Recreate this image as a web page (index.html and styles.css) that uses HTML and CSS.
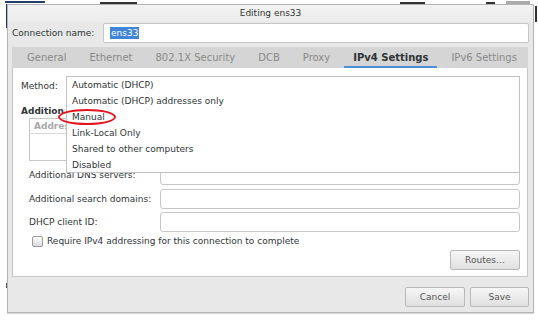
FILE: index.html
```html
<!DOCTYPE html>
<html lang="en">
<head>
    <meta charset="UTF-8">
    <title>Editing ens33</title>
    <link rel="stylesheet" href="styles.css">
</head>
<body>
    <div class="window">
        <div class="titlebar">Editing ens33</div>
        <div class="window-body">
            <!-- Connection name -->
            <div class="name-row">
                <span class="name-label">Connection name:</span>
                <div class="entry"><span class="selected">ens33</span></div>
            </div>

            <!-- Tabs -->
            <div class="tabs">
                <span class="tab">General</span>
                <span class="tab">Ethernet</span>
                <span class="tab">802.1X Security</span>
                <span class="tab">DCB</span>
                <span class="tab">Proxy</span>
                <span class="tab active">IPv4 Settings</span>
                <span class="tab">IPv6 Settings</span>
            </div>

            <div class="page">
                <div class="method-row">
                    <span class="method-label">Method:</span>
                    <div class="combo">
                        <ul class="popup">
                            <li>Automatic (DHCP)</li>
                            <li>Automatic (DHCP) addresses only</li>
                            <li>Manual</li>
                            <li>Link-Local Only</li>
                            <li>Shared to other computers</li>
                            <li>Disabled</li>
                            <span class="mark"></span>
                        </ul>
                    </div>
                </div>

                <!-- hidden behind the open popup, only the start shows -->
                <div class="section-title">Additional static addresses</div>
                <div class="addresses">
                    <div class="addresses-head">Address</div>
                </div>

                <div class="fields">
                    <span class="field-label">Additional DNS servers:</span>
                    <div class="entry"></div>
                    <span class="field-label">Additional search domains:</span>
                    <div class="entry"></div>
                    <span class="field-label">DHCP client ID:</span>
                    <div class="entry"></div>
                </div>

                <label class="check-row">
                    <span class="checkbox"></span>
                    Require IPv4 addressing for this connection to complete
                </label>

                <div class="routes-row">
                    <button class="button routes">Routes…</button>
                </div>
            </div>

            <div class="footer">
                <button class="button cancel">Cancel</button>
                <button class="button save">Save</button>
            </div>
        </div>
    </div>
</body>
</html>
```

FILE: styles.css
```css
* {
    margin: 0;
    padding: 0;
    box-sizing: border-box;
    font-family: 'DejaVu Sans', sans-serif;
}

body {
    width: 538px;
    height: 320px;
    overflow: hidden;
    background:
        linear-gradient(#27406b, #27406b) 5px 1px / 40px 2px no-repeat,
        linear-gradient(#333, #333) 100px 2px / 37px 2px no-repeat,
        linear-gradient(#2a3c5a, #2a3c5a) 6px 4px / 1px 24px no-repeat,
        linear-gradient(#333, #333) 400px 2px / 25px 2px no-repeat,
        linear-gradient(#333, #333) 486px 2px / 9px 2px no-repeat,
        linear-gradient(#aaa, #aaa) 506px 1px / 24px 3px no-repeat,
        linear-gradient(#333, #333) 535px 6px / 2px 16px no-repeat,
        linear-gradient(#555, #555) 6px 283px / 2px 5px no-repeat,
        #fff;
    padding-top: 4px;
    padding-left: 7px;
}

.window {
    width: 527px;
    height: 309px;
    border: 1px solid #b4b4b4;
    background: #e8e8e8;
    box-shadow: 0 1px 1px rgba(0, 0, 0, 0.15);
    display: flex;
    flex-direction: column;
}

.titlebar {
    height: 17px;
    line-height: 17px;
    text-align: center;
    font-size: 9px;
    color: #333;
    background: linear-gradient(#f2f2f2, #ececec);
}

.window-body {
    flex: 1;
    padding: 1px 4px 4px 4px;
    display: flex;
    flex-direction: column;
}

.name-row {
    display: flex;
    align-items: center;
    height: 20px;
}

.name-label {
    width: 91px;
    font-size: 9px;
    color: #2e3436;
}

.entry {
    flex: 1;
    height: 20px;
    background: #fff;
    border: 1px solid #c6c6c6;
    border-radius: 2px;
    font-size: 9px;
    line-height: 18px;
    padding-left: 6px;
}

.selected {
    background: #3f84d8;
    color: #fff;
    padding: 1px 1px;
}

.tabs {
    margin-top: 4px;
    width: 516px;
    height: 21px;
    background: #d5d5d5;
    display: flex;
    padding-left: 6px;
}

.tab {
    flex: none;
    white-space: nowrap;
    padding: 0 9px;
    margin-right: 5px;
    font-size: 10px;
    line-height: 21px;
    color: #8a8a8a;
}

.tab.active {
    font-weight: bold;
    color: #2e3436;
    box-shadow: inset 0 -2px #4a90d9;
}

.page {
    width: 516px;
    height: 209px;
    background: #fff;
    border: 1px solid #c6c6c6;
    border-top: none;
    padding: 8px 7px 0 8px;
    font-size: 9px;
    color: #2e3436;
}

.method-row {
    display: flex;
    align-items: center;
    height: 20px;
}

.method-label {
    width: 45px;
}

.combo {
    position: relative;
    flex: 1;
    height: 20px;
    border: 1px solid #c6c6c6;
    border-radius: 2px;
    background: #f2f2f2;
}

.popup {
    position: absolute;
    top: -1px;
    left: -1px;
    right: -1px;
    height: 97px;
    background: #fff;
    border: 1px solid #c2c2c2;
    list-style: none;
    z-index: 2;
}

.popup li {
    line-height: 16px;
    padding-left: 5px;
    color: #2e3436;
}

.mark {
    position: absolute;
    left: -9px;
    top: 32px;
    width: 58px;
    height: 16px;
    border: 2.5px solid #e3141c;
    border-radius: 50%;
}

.section-title {
    margin-top: 9px;
    width: 44px;
    overflow: hidden;
    white-space: nowrap;
    line-height: 12px;
    font-weight: bold;
}

.addresses {
    margin: 1px 0 0 8px;
    height: 43px;
    border: 1px solid #c6c6c6;
}

.addresses-head {
    height: 15px;
    line-height: 14px;
    padding-left: 4px;
    border-bottom: 1px solid #d8d8d8;
    color: #a8a8a8;
    font-weight: bold;
}

.fields {
    margin: 4px 0 0 8px;
    display: grid;
    grid-template-columns: 131px 1fr;
    grid-auto-rows: 20px;
    row-gap: 3.5px;
    align-items: center;
}

.fields .entry {
    border-radius: 3px;
}

.check-row {
    margin: 3px 0 0 11px;
    height: 12px;
    display: flex;
    align-items: center;
    gap: 4px;
}

.checkbox {
    width: 11px;
    height: 11px;
    border: 1px solid #9a9a9a;
    border-radius: 2px;
    background: linear-gradient(#fdfdfd, #dcdcdc);
}

.routes-row {
    margin-top: 3px;
    display: flex;
    justify-content: flex-end;
}

.button {
    height: 20px;
    font-size: 9px;
    color: #555;
    background: linear-gradient(#f6f6f6, #e0e0e0);
    border: 1px solid #b8b8b8;
    border-radius: 2px;
}

.routes {
    width: 70px;
}

.footer {
    padding-top: 10px;
    display: flex;
    justify-content: flex-end;
    gap: 5px;
}

.cancel {
    width: 60px;
}

.save {
    width: 59px;
}
```
